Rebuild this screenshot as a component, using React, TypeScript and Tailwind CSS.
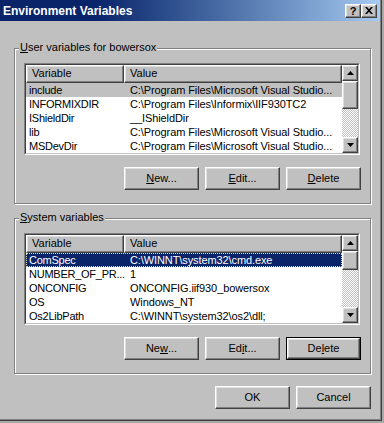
import React from 'react';

const FACE = 'bg-[#c0c0c0]';
const raised =
  'border border-t-white border-l-white border-r-[#404040] border-b-[#404040] shadow-[inset_-1px_-1px_0_#808080,inset_1px_1px_0_#dfdfdf]';

type Row = { name: string; value: string };

const userVars: Row[] = [
  { name: 'include', value: 'C:\\Program Files\\Microsoft Visual Studio...' },
  { name: 'INFORMIXDIR', value: 'C:\\Program Files\\Informix\\IIF930TC2' },
  { name: 'IShieldDir', value: '__IShieldDir' },
  { name: 'lib', value: 'C:\\Program Files\\Microsoft Visual Studio...' },
  { name: 'MSDevDir', value: 'C:\\Program Files\\Microsoft Visual Studio...' },
];

const systemVars: Row[] = [
  { name: 'ComSpec', value: 'C:\\WINNT\\system32\\cmd.exe' },
  { name: 'NUMBER_OF_PR...', value: '1' },
  { name: 'ONCONFIG', value: 'ONCONFIG.iif930_bowersox' },
  { name: 'OS', value: 'Windows_NT' },
  { name: 'Os2LibPath', value: 'C:\\WINNT\\system32\\os2\\dll;' },
];

const Arrow = ({ up }: { up?: boolean }) => (
  <div className={`w-[16px] h-[16px] ${FACE} ${raised} flex items-center justify-center`}>
    <svg width="7" height="4" viewBox="0 0 7 4">
      {up ? <polygon points="3.5,0 7,4 0,4" fill="#000" /> : <polygon points="0,0 7,0 3.5,4" fill="#000" />}
    </svg>
  </div>
);

const Scrollbar = ({ thumb }: { thumb: number }) => (
  <div className="w-[16px] h-full flex flex-col">
    <Arrow up />
    <div className="flex-1 flex flex-col bg-[image:repeating-conic-gradient(#ffffff_0_25%,#c0c0c0_0_50%)] bg-[length:2px_2px]">
      <div className={`w-[16px] ${FACE} ${raised}`} style={{ height: thumb }} />
    </div>
    <Arrow />
  </div>
);

const ListView = ({ rows, selected, focused, thumb }: { rows: Row[]; selected: number; focused?: boolean; thumb: number }) => (
  <div className="w-[336px] h-[92px] border border-t-[#808080] border-l-[#808080] border-r-white border-b-white">
    <div className="w-full h-full border border-t-[#404040] border-l-[#404040] border-r-[#c0c0c0] border-b-[#c0c0c0] bg-white flex">
      <div className="w-[316px] flex flex-col">
        <div className="flex h-[18px] leading-[14px]">
          <div className={`w-[98px] pl-[5px] ${FACE} ${raised}`}>Variable</div>
          <div className={`flex-1 pl-[5px] ${FACE} ${raised}`}>Value</div>
        </div>
        {rows.map((r, i) => {
          const sel = i === selected;
          const cls = sel
            ? focused
              ? 'bg-[#0a246a] text-white outline-1 outline-dotted outline-[#e0e0a0] -outline-offset-1'
              : 'bg-[#c0c0c0]'
            : '';
          return (
            <div key={r.name} className={`flex h-[14px] leading-[14px] whitespace-nowrap tracking-[-0.1px] ${cls}`}>
              <div className="w-[98px] shrink-0 pl-[3px] tracking-[-0.25px]">{r.name}</div>
              <div className="flex-1 pl-[6px] overflow-hidden">{r.value}</div>
            </div>
          );
        })}
      </div>
      <Scrollbar thumb={thumb} />
    </div>
  </div>
);

const Button = ({ children, isDefault }: { children: React.ReactNode; isDefault?: boolean }) => (
  <div className={`w-[75px] h-[23px] ${isDefault ? 'border border-black' : ''}`}>
    <div className={`w-full h-full ${FACE} ${raised} flex items-center justify-center leading-[13px]`}>{children}</div>
  </div>
);

const GroupBox = ({ label, children }: { label: React.ReactNode; children: React.ReactNode }) => (
  <div className="relative w-[357px] border border-[#808080] shadow-[inset_1px_1px_0_#fff,1px_1px_0_#fff] px-[9px] pt-[14px] pb-[13px]">
    <span className={`absolute left-[4px] -top-[8px] ${FACE} px-[1px] leading-[13px]`}>{label}</span>
    {children}
  </div>
);

export default function App() {
  return (
    <div className="w-[384px] h-[423px] bg-[#a8a8a8] overflow-hidden font-['Liberation_Sans',Arial,sans-serif] text-[11px] text-black">
      <div className="w-[382px] h-[421px] border-r border-b border-[#404040]">
        <div className={`w-[381px] h-[420px] border-r border-b border-[#808080] ${FACE} flex flex-col`}>
          <div className="h-[21px] flex items-center bg-gradient-to-r from-[#0a246a] from-25% to-[#a6caf0] pl-[3px] pr-[3px]">
            <span className="text-white font-bold text-[12px] leading-[14px]">Environment Variables</span>
            <div className="ml-auto flex">
              <div className={`w-[16px] h-[14px] ${FACE} ${raised} flex items-center justify-center font-bold text-[11px] leading-[10px]`}>?</div>
              <div className={`w-[16px] h-[14px] ${FACE} ${raised} flex items-center justify-center`}>
                <svg width="8" height="7" viewBox="0 0 8 7">
                  <path d="M0 0h2l2 2.2L6 0h2L5 3.5 8 7H6L4 4.8 2 7H0l3-3.5z" fill="#000" />
                </svg>
              </div>
            </div>
          </div>

          <div className="pl-[14px] pt-[27px] flex flex-col">
            <GroupBox
              label={
                <>
                  <u>U</u>ser variables for bowersox
                </>
              }
            >
              <ListView rows={userVars} selected={0} thumb={28} />
              <div className="mt-[12px] flex justify-end gap-[6px]">
                <Button>
                  <u>N</u>ew...
                </Button>
                <Button>
                  <u>E</u>dit...
                </Button>
                <Button>
                  <u>D</u>elete
                </Button>
              </div>
            </GroupBox>

            <div className="mt-[14px]">
              <GroupBox
                label={
                  <>
                    <u>S</u>ystem variables
                  </>
                }
              >
                <ListView rows={systemVars} selected={0} focused thumb={19} />
                <div className="mt-[12px] flex justify-end gap-[6px]">
                  <Button>
                    Ne<u>w</u>...
                  </Button>
                  <Button>
                    Ed<u>i</u>t...
                  </Button>
                  <Button isDefault>
                    De<u>l</u>ete
                  </Button>
                </div>
              </GroupBox>
            </div>

            <div className="mt-[12px] w-[357px] flex justify-end gap-[6px]">
              <Button>OK</Button>
              <Button>Cancel</Button>
            </div>
          </div>
        </div>
      </div>
    </div>
  );
}
